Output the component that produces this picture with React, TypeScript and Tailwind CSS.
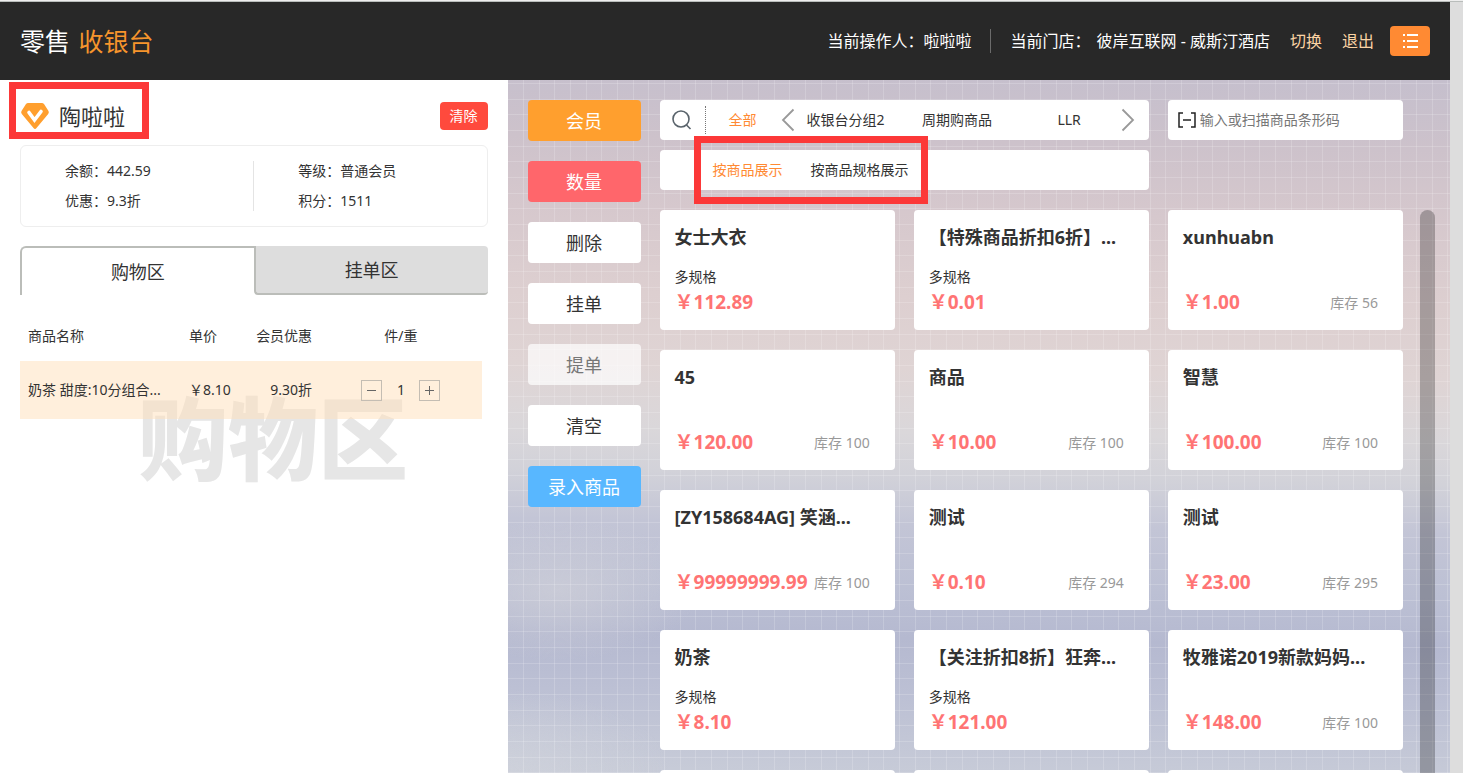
import React from "react";

type Product = {
  name: string;
  price: string;
  stock?: number;
};

const products: Product[] = [
  { name: "女士大衣", price: "112.89" },
  { name: "【特殊商品折扣6折】...", price: "0.01" },
  { name: "xunhuabn", price: "1.00", stock: 56 },
  { name: "45", price: "120.00", stock: 100 },
  { name: "商品", price: "10.00", stock: 100 },
  { name: "智慧", price: "100.00", stock: 100 },
  { name: "[ZY158684AG] 笑涵...", price: "99999999.99", stock: 100 },
  { name: "测试", price: "0.10", stock: 294 },
  { name: "测试", price: "23.00", stock: 295 },
  { name: "奶茶", price: "8.10" },
  { name: "【关注折扣8折】狂奔...", price: "121.00" },
  { name: "牧雅诺2019新款妈妈...", price: "148.00", stock: 100 },
];

const actions = [
  { label: "会员", style: "bg-[#ff9f2e] text-white" },
  { label: "数量", style: "bg-[#ff666b] text-white" },
  { label: "删除", style: "bg-white text-[#333]" },
  { label: "挂单", style: "bg-white text-[#333]" },
  { label: "提单", style: "bg-white/70 text-[#777]", disabled: true },
  { label: "清空", style: "bg-white text-[#333]" },
  { label: "录入商品", style: "bg-[#58b7ff] text-white" },
];

function Header() {
  return (
    <header className="flex h-[78px] shrink-0 items-center justify-between bg-[#282828] px-5 text-white">
      <h1 className="text-[25px] leading-9">
        零售 <span className="ml-0.5 text-[#f7952c]">收银台</span>
      </h1>
      <div className="flex items-center text-base">
        <span>当前操作人：啦啦啦</span>
        <span className="mx-[19px] h-6 w-px bg-[#6b6b6b]" />
        <span>当前门店：</span>
        <span className="ml-1.5">彼岸互联网 - 威斯汀酒店</span>
        <a href="#switch" className="ml-5 text-[#fbd3a4]">切换</a>
        <a href="#logout" className="ml-5 text-[#fbd3a4]">退出</a>
        <button type="button" aria-label="菜单" className="ml-4 flex h-[30px] w-10 items-center justify-center rounded bg-[#ff8a33]">
          <svg width="20" height="18" viewBox="0 0 20 18" stroke="#fff" strokeWidth="2">
            <path d="M3 3h2M7 3h11M3 9h2M7 9h11M3 15h2M7 15h11" />
          </svg>
        </button>
      </div>
    </header>
  );
}

function Member() {
  return (
    <section>
      <div className="flex h-[65px] items-center justify-between pt-1.5">
        <div className="relative flex items-center gap-[9px]">
          <svg width="30" height="28" viewBox="0 0 30 28">
            <path d="M8 1h14q1 0 2 1l4.500 7q.8 1.500-.3 3L16.500 26q-1.500 1.800-3 0L1.800 12q-1.100-1.500-.3-3L6 2q1-1 2-1z" fill="#ff9f2e" />
            <path d="M9 10.500l5.500 7.500L21 9.500" fill="none" stroke="#fff" strokeWidth="3.600" strokeLinecap="round" />
          </svg>
          <span className="text-[22px] leading-8 text-[#333]">陶啦啦</span>
          <span className="pointer-events-none absolute -top-[18px] -right-6 -bottom-[7px] -left-[11px] border-[7px] border-[#fc3838]" />
        </div>
        <button type="button" className="h-7 w-12 rounded bg-[#ff4a3d] text-sm text-white">清除</button>
      </div>
      <div className="flex items-center rounded-md border border-[#eee] py-2.5 text-sm leading-[30px] text-[#333]">
        <div className="flex-1 pl-11">
          <p>余额：442.59</p>
          <p>优惠：9.3折</p>
        </div>
        <div className="h-[50px] w-px bg-[#e4e4e4]" />
        <div className="flex-1 pl-11">
          <p>等级：普通会员</p>
          <p>积分：1511</p>
        </div>
      </div>
    </section>
  );
}

function Cart() {
  const step = "inline-flex h-[21px] w-[21px] items-center justify-center border border-[#c4bdb3] text-[#666]";
  return (
    <section>
      <div role="tablist" className="mt-[19px] flex h-[49px] text-lg text-[#333]">
        <button type="button" role="tab" aria-selected="true" className="flex-1 rounded-tl-md border-t-2 border-l-2 border-[#bbbdb9] bg-white">
          购物区
        </button>
        <button type="button" role="tab" aria-selected="false" className="flex-1 rounded-r rounded-bl border-b-2 border-l-2 border-[#bbbdb9] bg-[#ddd]">
          挂单区
        </button>
      </div>
      <div className="relative pt-4 pr-1.5">
        <div className="pointer-events-none absolute top-[78px] left-[118px] text-[90px] leading-[130px] font-black whitespace-nowrap text-[#e6e6e6]">
          购物区
        </div>
        <table className="relative w-full table-fixed text-sm text-[#333]">
          <colgroup>
            <col className="w-[34%]" />
            <col className="w-[15%]" />
            <col className="w-[20%]" />
            <col className="w-[31%]" />
          </colgroup>
          <thead>
            <tr className="h-[50px]">
              <th className="pl-2 text-left font-normal">商品名称</th>
              <th className="pl-3 text-left font-normal">单价</th>
              <th className="pl-2.5 text-left font-normal">会员优惠</th>
              <th className="pr-[18px] text-center font-normal">件/重</th>
            </tr>
          </thead>
          <tbody>
            <tr className="h-[58px] bg-[#ffdfb9]/50">
              <td className="pl-2 whitespace-nowrap">奶茶 甜度:10分组合...</td>
              <td className="pl-3">￥8.10</td>
              <td className="pl-6">9.30折</td>
              <td className="pr-[18px]">
                <div className="flex items-center justify-center">
                  <button type="button" aria-label="减少" className={step}>
                    <svg width="11" height="11" viewBox="0 0 11 11" stroke="currentColor"><path d="M1 5.500h9" /></svg>
                  </button>
                  <span className="w-[37px] text-center">1</span>
                  <button type="button" aria-label="增加" className={step}>
                    <svg width="11" height="11" viewBox="0 0 11 11" stroke="currentColor"><path d="M1 5.500h9M5.500 1v9" /></svg>
                  </button>
                </div>
              </td>
            </tr>
          </tbody>
        </table>
      </div>
    </section>
  );
}

function Chevron({ path }: { path: string }) {
  return (
    <svg width="14" height="24" viewBox="0 0 14 24" fill="none" stroke="#999" strokeWidth="1.800">
      <path d={path} />
    </svg>
  );
}

function Filters() {
  return (
    <div className="grid grid-cols-3 gap-x-[19px] gap-y-2.5 text-sm text-[#333]">
      <div className="col-span-2 flex h-10 items-center rounded bg-white">
        <button type="button" aria-label="搜索" className="flex h-7 w-[46px] items-center justify-center border-r border-dotted border-[#777]">
          <svg width="20" height="20" viewBox="0 0 20 20" fill="none" stroke="#59636b" strokeWidth="1.600">
            <circle cx="9" cy="9" r="8" />
            <path d="M14.500 15l4 4" />
          </svg>
        </button>
        <button type="button" className="ml-[23px] text-[#ff8a33]">全部</button>
        <button type="button" aria-label="上一组" className="ml-6">
          <Chevron path="M12.500 1.500L2 12l10.500 10.500" />
        </button>
        <div className="flex flex-1 items-center justify-between pr-10 pl-3">
          <button type="button">收银台分组2</button>
          <button type="button" className="pr-7">周期购商品</button>
          <button type="button">LLR</button>
        </div>
        <button type="button" aria-label="下一组" className="mr-3.5">
          <Chevron path="M1.500 1.500L12 12 1.500 22.500" />
        </button>
      </div>
      <label className="flex h-10 items-center rounded bg-white pl-2.5">
        <svg width="18" height="16" viewBox="0 0 18 16" fill="none" stroke="#222" strokeWidth="1.500">
          <path d="M5 1H1v14h4M13 1h4v14h-4M5 8h8" />
        </svg>
        <input
          type="text"
          aria-label="商品条形码"
          placeholder="输入或扫描商品条形码"
          className="ml-1 min-w-0 flex-1 bg-transparent placeholder:text-[#777]"
        />
      </label>
      <div className="col-span-2 flex h-10 items-center rounded bg-white pl-[34px]">
        <div className="relative flex h-[68px] items-center gap-7 border-[7px] border-[#fc3838] px-3">
          <button type="button" className="text-[#ff8a33]">按商品展示</button>
          <button type="button">按商品规格展示</button>
        </div>
      </div>
    </div>
  );
}

function Card({ name, price, stock }: Product) {
  return (
    <article className="flex h-[120px] flex-col rounded bg-white px-[15px] pt-[13px] pb-3">
      <h2 className="text-lg leading-7 font-bold whitespace-nowrap text-[#333]">{name}</h2>
      <p className="mt-4 h-5 text-sm leading-5 text-[#333]">{stock === undefined && "多规格"}</p>
      <div className="mt-px flex items-center justify-between pr-2.5 leading-7 whitespace-nowrap">
        <span className="text-[19px] font-bold text-[#ff7474]">￥{price}</span>
        {stock !== undefined && <span className="pt-0.5 text-sm text-[#999]">库存 {stock}</span>}
      </div>
    </article>
  );
}

export default function App() {
  return (
    <div className="flex h-screen flex-col overflow-hidden bg-white font-['Noto_Sans','Noto_Sans_CJK_SC',sans-serif]">
      <div className="h-0.5 shrink-0 border-b border-[#b9bdbb] bg-[#eee]" />
      <div className="flex min-h-0 flex-1">
        <div className="flex min-w-0 flex-1 flex-col">
          <Header />
          <div className="flex min-h-0 flex-1">
            <aside className="w-[35%] shrink-0 px-5">
              <Member />
              <Cart />
            </aside>
            <main className="flex min-w-0 flex-1 gap-[19px] bg-[repeating-linear-gradient(90deg,transparent_0_15px,#ffffff2c_15px_16px,transparent_16px_31px,#ffffff2c_31px_32px,transparent_32px_46px,#ffffff2c_46px_47px),repeating-linear-gradient(180deg,transparent_0_3px,#ffffff2c_3px_4px,transparent_4px_19px,#ffffff2c_19px_20px,transparent_20px_34px,#ffffff2c_34px_35px,transparent_35px_47px),radial-gradient(ellipse_140px_70px_at_50px_510px,#cdced8cc,transparent),radial-gradient(ellipse_160px_80px_at_0px_690px,#cfd2dbcc,transparent),linear-gradient(181deg,#c5bfcd_0%,#cdc2cb_10%,#d6c8cd_20%,#ddcfd0_32%,#dfd4d4_42%,#dad7da_51%,#d2d2d9_57%,#c3c5d6_64%,#bcc0d4_73%,#b5b9d0_80%,#bcc0d4_88%,#c8ccd8_100%)] pt-5 pr-[15px] pl-5">
              <nav className="flex w-[113px] shrink-0 flex-col gap-5">
                {actions.map((a) => (
                  <button key={a.label} type="button" disabled={a.disabled} className={`h-[41px] rounded text-lg leading-6 ${a.style}`}>
                    {a.label}
                  </button>
                ))}
              </nav>
              <div className="flex min-w-0 flex-1 flex-col">
                <div className="mr-8">
                  <Filters />
                </div>
                <div className="mt-5 flex min-h-0 flex-1 overflow-hidden">
                  <div className="grid min-w-0 flex-1 auto-rows-min grid-cols-3 gap-x-[19px] gap-y-5">
                    {products.map((p, i) => (
                      <Card key={i} {...p} />
                    ))}
                    <div className="h-[120px] rounded bg-white" />
                    <div className="h-[120px] rounded bg-white" />
                    <div className="h-[120px] rounded bg-white" />
                  </div>
                  <div className="ml-[17px] h-[640px] w-[15px] shrink-0 rounded-full bg-black/25" />
                </div>
              </div>
            </main>
          </div>
        </div>
        <div className="w-[13px] shrink-0 bg-[#ddd]" />
      </div>
    </div>
  );
}
